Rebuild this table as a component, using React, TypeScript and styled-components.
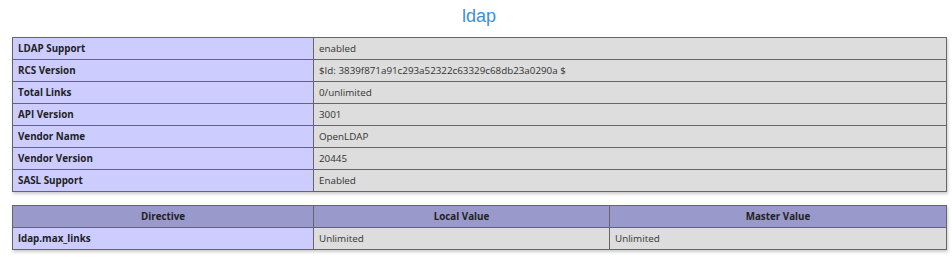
import styled, { createGlobalStyle } from "styled-components";

const Global = createGlobalStyle`
  body {
    margin: 0;
    background: #fff;
    font-family: "Open Sans", "Noto Sans", sans-serif;
    color: #222;
  }
`

const Page = styled.div`
  width: 952px;
  padding: 0 6px 0 12px;
  box-sizing: border-box;
`

const Title = styled.h2`
  margin: 0;
  height: 37px;
  padding-top: 4px;
  box-sizing: border-box;
  text-align: center;
  font-family: "Liberation Sans", Arial, sans-serif;
  font-weight: normal;
  font-size: 18px;
  line-height: 24px;
  color: #3d8fdc;
`

const Table = styled.table`
  border-collapse: collapse;
  width: 935px;
  table-layout: fixed;
  box-shadow: 1px 2px 3px #ccc;
  margin-bottom: 13px;
  td, th {
    border: 1px solid #666;
    font-size: 9.8px;
    height: 21px;
    padding: 0 5px;
    line-height: 21px;
    box-sizing: border-box;
    white-space: nowrap;
    overflow: hidden;
  }
`

const Key = styled.td`
  background-color: #ccf;
  font-weight: bold;
  text-align: left;
  color: #222;
`

const Value = styled.td`
  background-color: #ddd;
  color: #333;
`

const Head = styled.th`
  background-color: #99c;
  font-weight: bold;
  text-align: center;
  color: #222;
`

const rows: [string, string][] = [
  ["LDAP Support", "enabled"],
  ["RCS Version", "$Id: 3839f871a91c293a52322c63329c68db23a0290a $"],
  ["Total Links", "0/unlimited"],
  ["API Version", "3001"],
  ["Vendor Name", "OpenLDAP"],
  ["Vendor Version", "20445"],
  ["SASL Support", "Enabled"],
];

export default function App() {
  return (
    <Page>
      <Global />
      <Title>ldap</Title>
      <Table>
        <colgroup>
          <col style={{ width: 301 }} />
          <col />
        </colgroup>
        <tbody>
          {rows.map(([k, v]) => (
            <tr key={k}>
              <Key>{k}</Key>
              <Value>{v}</Value>
            </tr>
          ))}
        </tbody>
      </Table>
      <Table>
        <colgroup>
          <col style={{ width: 301 }} />
          <col style={{ width: 296 }} />
          <col />
        </colgroup>
        <thead>
          <tr>
            <Head>Directive</Head>
            <Head>Local Value</Head>
            <Head>Master Value</Head>
          </tr>
        </thead>
        <tbody>
          <tr>
            <Key>ldap.max_links</Key>
            <Value>Unlimited</Value>
            <Value>Unlimited</Value>
          </tr>
        </tbody>
      </Table>
    </Page>
  );
}
